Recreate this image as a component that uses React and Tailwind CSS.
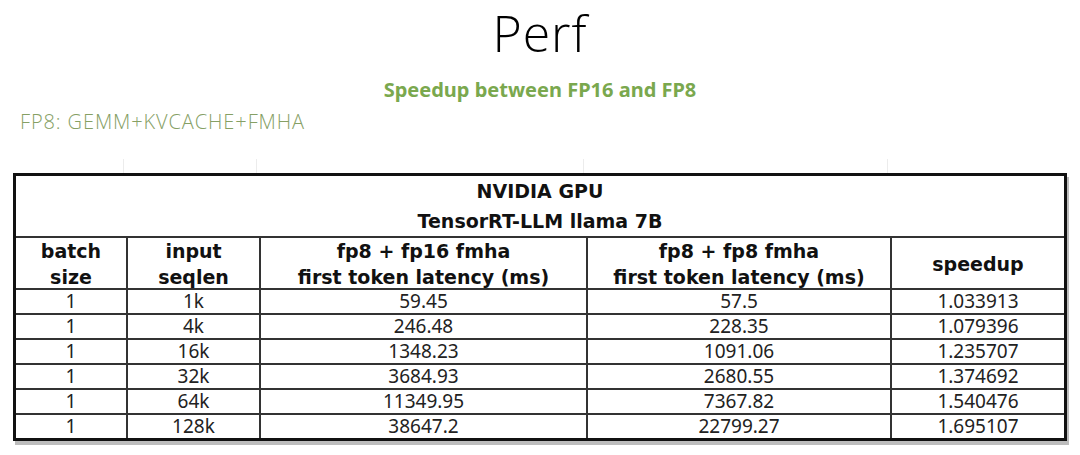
import React from 'react';

const rows = [
  ['1', '1k', '59.45', '57.5', '1.033913'],
  ['1', '4k', '246.48', '228.35', '1.079396'],
  ['1', '16k', '1348.23', '1091.06', '1.235707'],
  ['1', '32k', '3684.93', '2680.55', '1.374692'],
  ['1', '64k', '11349.95', '7367.82', '1.540476'],
  ['1', '128k', '38647.2', '22799.27', '1.695107'],
];

const cols = 'grid grid-cols-[110px_133px_327px_304px_1fr]';

export default function App() {
  return (
    <div className="w-[1080px] h-[455px] bg-white overflow-hidden font-['Noto_Sans',sans-serif]">
      <h1 className="pt-[2px] text-center text-[50px] leading-[62px] font-light tracking-[1px] text-black font-['Open_Sans',sans-serif]">
        Perf
      </h1>
      <p className="mt-[13px] text-center text-[20px] leading-[26px] font-bold text-[#7aa84e]">
        Speedup between FP16 and FP8
      </p>
      <p className="mt-[6px] pl-[20px] text-[20px] leading-[26px] font-light text-[#86a064] font-['Open_Sans',sans-serif] tracking-[0.9px]">
        FP8: GEMM+KVCACHE+FMHA
      </p>

      {/* faint grid lines above the table */}
      <div className={`${cols} ml-[13px] w-[1054px] h-[14px] mt-[24px]`}>
        <div />
        <div className="border-l border-[#ececec]" />
        <div className="border-l border-[#ececec]" />
        <div className="border-l border-[#ececec]" />
        <div className="border-l border-[#ececec]" />
      </div>

      <div className="ml-[13px] w-[1054px] border-[3px] border-[#111] shadow-[2px_4px_0_#bdbdbd] text-[#111]">
        <div className="h-[60px] flex flex-col items-center justify-center text-[19px] leading-[30px] font-bold font-['DejaVu_Sans',sans-serif]">
          <div>NVIDIA GPU</div>
          <div>TensorRT-LLM llama 7B</div>
        </div>
        <div className={`${cols} h-[52px] border-t-2 border-[#333] text-[19px] leading-[26px] font-bold font-['DejaVu_Sans',sans-serif]`}>
          <div className="flex flex-col items-center justify-center">
            <span>batch</span>
            <span>size</span>
          </div>
          <div className="flex flex-col items-center justify-center border-l-2 border-[#333]">
            <span>input</span>
            <span>seqlen</span>
          </div>
          <div className="flex flex-col items-center justify-center border-l-2 border-[#333]">
            <span>fp8 + fp16 fmha</span>
            <span>first token latency (ms)</span>
          </div>
          <div className="flex flex-col items-center justify-center border-l-2 border-[#333]">
            <span>fp8 + fp8 fmha</span>
            <span>first token latency (ms)</span>
          </div>
          <div className="flex items-center justify-center border-l-2 border-[#333]">
            speedup
          </div>
        </div>
        {rows.map((r, i) => (
          <div
            key={i}
            className={`${cols} h-[25px] border-t-2 border-[#333] text-[19px] leading-[23px] text-[#222]`}
          >
            {r.map((c, j) => (
              <div
                key={j}
                className={`text-center ${j > 0 ? 'border-l-2 border-[#333]' : ''}`}
              >
                {c}
              </div>
            ))}
          </div>
        ))}
      </div>
    </div>
  );
}
